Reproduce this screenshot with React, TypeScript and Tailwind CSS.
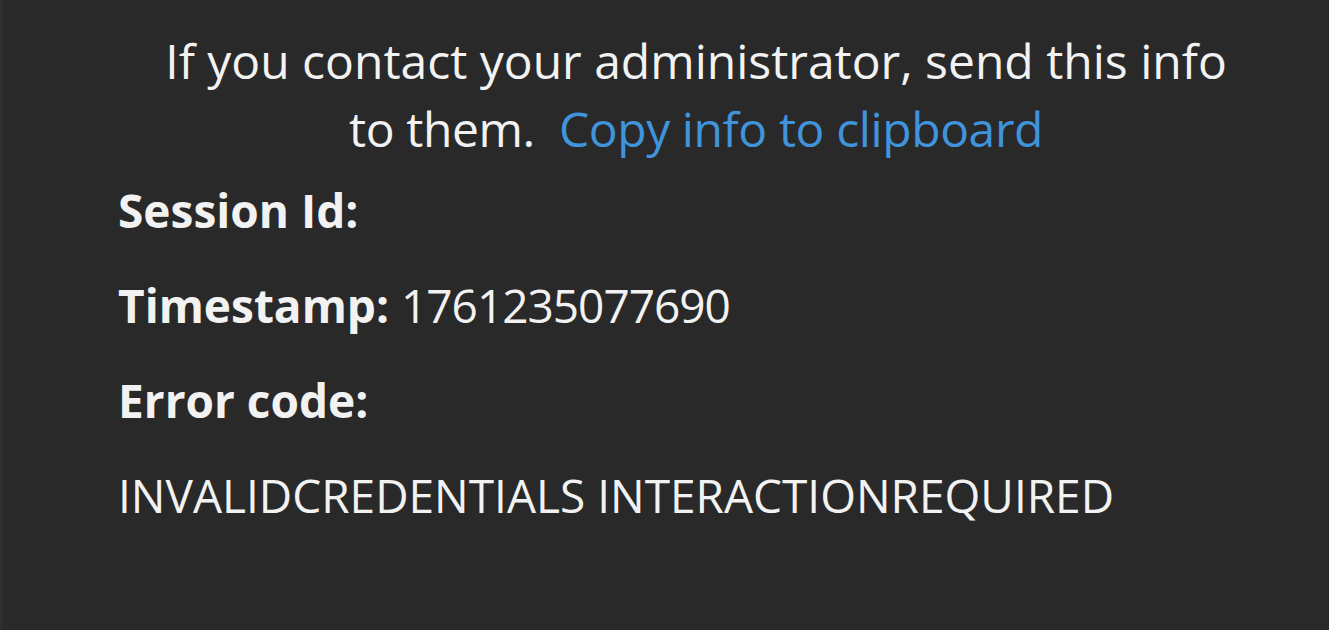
import React from 'react';

const font = { fontFamily: '"Open Sans", "Noto Sans", sans-serif' };

export default function App() {
  return (
    <div className="w-[1329px] h-[630px] bg-[#292929] text-[#f2f2f2] overflow-hidden border-l-[3px] border-[#2e2e2e]" style={font}>
      <div className="pl-[115px] pr-[55px] pt-[27px]">
        <p className="w-[1090px] ml-[33px] text-center text-[48px] leading-[68px]">
          <span>If you contact your administrator, send this info</span>{' '}
          <span className="tracking-[-0.4px]">to them.{'\u00A0 '}</span>
          <a className="text-[#3f94dc] cursor-pointer tracking-[-0.4px]">Copy info to clipboard</a>
        </p>
        <div className="flex flex-col text-[46px] leading-[95px]">
          <div><span className="font-bold">Session Id:</span></div>
          <div>
            <span className="font-bold">Timestamp:</span>{' '}
            <span className="tracking-[-1px]">1761235077690</span>
          </div>
          <div><span className="font-bold">Error code:</span></div>
          <div>INVALIDCREDENTIALS INTERACTIONREQUIRED</div>
        </div>
      </div>
    </div>
  );
}
